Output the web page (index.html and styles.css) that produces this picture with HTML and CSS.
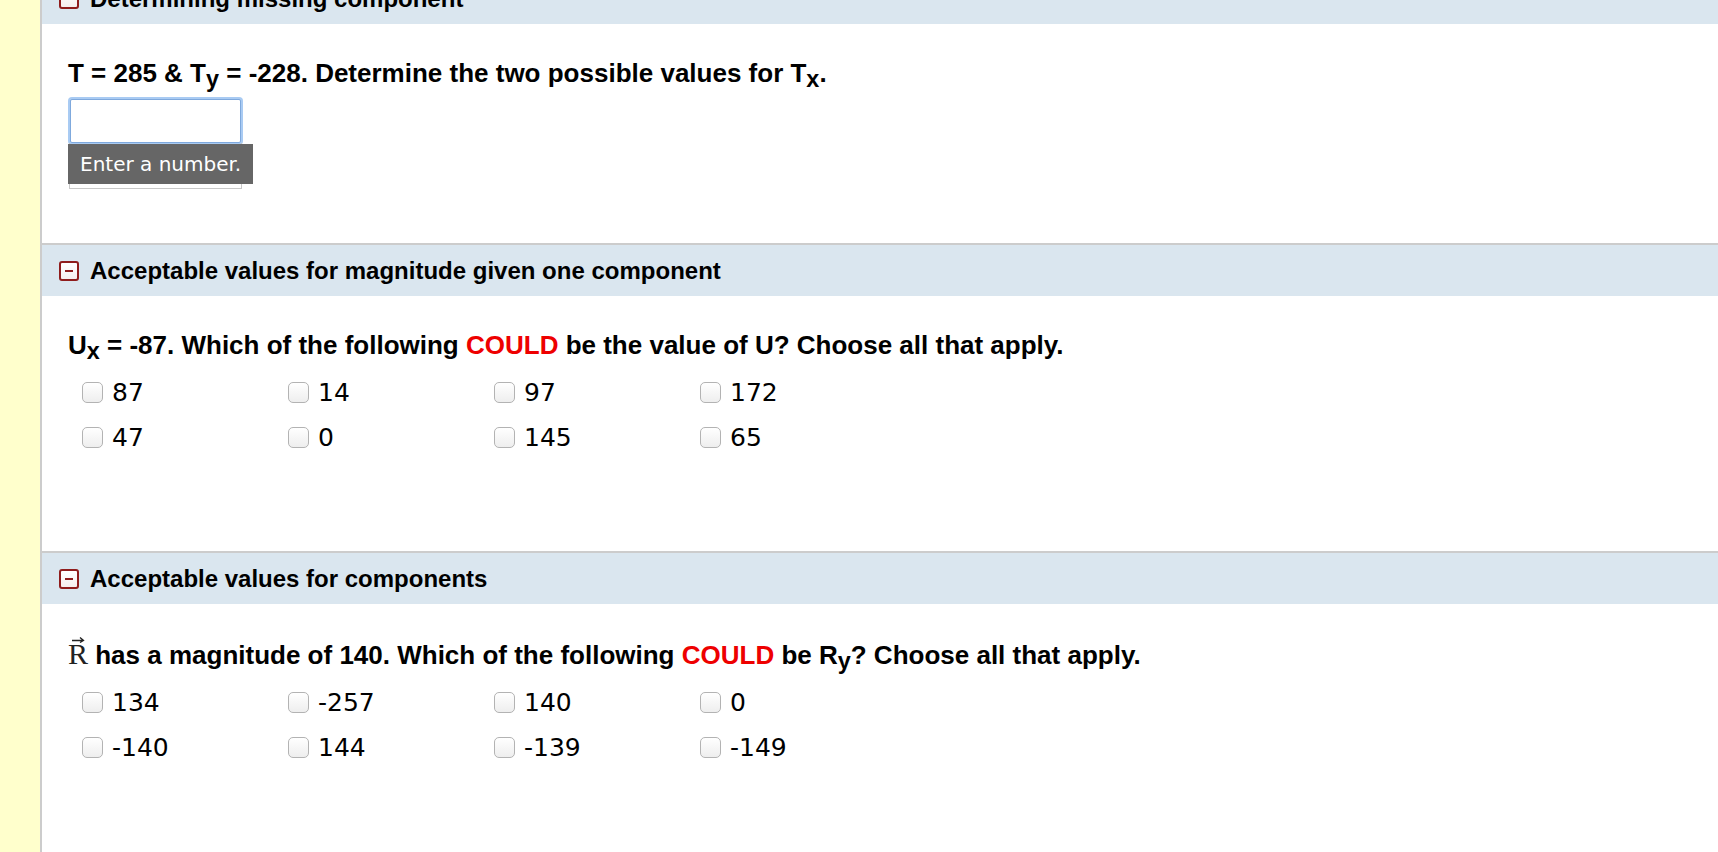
FILE: index.html
```html
<!DOCTYPE html>
<html lang="en">
<head>
<meta charset="UTF-8">
<title>Vector components</title>
<link rel="stylesheet" href="styles.css">
</head>
<body>
<div class="page">
  <div class="sidebar"></div>
  <div class="main">

    <!-- Determining missing component -->
    <div class="section first">
      <div class="section-head"><span class="toggle"></span>Determining missing component</div>
      <div class="section-body">
        <p class="question">T = 285 &amp; T<sub>y</sub> = -228. Determine the two possible values for T<sub>x</sub>.</p>
        <div class="answer">
          <input type="text" class="answer-input">
          <div class="answer-drop"></div>
          <div class="tooltip">Enter a number.</div>
        </div>
      </div>
    </div>

    <!-- Acceptable values for magnitude -->
    <div class="section">
      <div class="section-head"><span class="toggle"></span>Acceptable values for magnitude given one component</div>
      <div class="section-body">
        <p class="question">U<sub>x</sub> = -87. Which of the following <span class="hl">COULD</span> be the value of U? Choose all that apply.</p>
        <div class="options">
          <label class="option"><input type="checkbox">87</label>
          <label class="option"><input type="checkbox">14</label>
          <label class="option"><input type="checkbox">97</label>
          <label class="option"><input type="checkbox">172</label>
          <label class="option"><input type="checkbox">47</label>
          <label class="option"><input type="checkbox">0</label>
          <label class="option"><input type="checkbox">145</label>
          <label class="option"><input type="checkbox">65</label>
        </div>
      </div>
    </div>

    <!-- Acceptable values for components -->
    <div class="section">
      <div class="section-head"><span class="toggle"></span>Acceptable values for components</div>
      <div class="section-body">
        <p class="question"><span class="vec">R<svg class="vec-arrow" width="14" height="8" viewBox="0 0 14 8"><path d="M1 5.5H12.5M9 2.5L12.5 5.5L9 7.5" fill="none" stroke="#222" stroke-width="1.3"/></svg></span> has a magnitude of 140. Which of the following <span class="hl">COULD</span> be R<sub>y</sub>? Choose all that apply.</p>
        <div class="options">
          <label class="option"><input type="checkbox">134</label>
          <label class="option"><input type="checkbox">-257</label>
          <label class="option"><input type="checkbox">140</label>
          <label class="option"><input type="checkbox">0</label>
          <label class="option"><input type="checkbox">-140</label>
          <label class="option"><input type="checkbox">144</label>
          <label class="option"><input type="checkbox">-139</label>
          <label class="option"><input type="checkbox">-149</label>
        </div>
      </div>
    </div>

  </div>
</div>
</body>
</html>
```

FILE: styles.css
```css
body {
  margin: 0;
  font-family: "Liberation Sans", Arial, sans-serif;
  color: #000;
  background: #fff;
}
.page {
  display: flex;
  min-height: 100vh;
  overflow: hidden;
}
.sidebar {
  width: 40px;
  flex: none;
  background-color: #ffffcc;
  border-right: 2px solid #cccccc;
}
.main {
  flex: 1;
}
.section.first {
  margin-top: -29px;
}
.section-head {
  display: flex;
  align-items: center;
  height: 51px;
  padding-left: 17px;
  background-color: #dae6ef;
  border-top: 2px solid #cccccc;
  font-size: 24px;
  font-weight: bold;
}
.toggle {
  position: relative;
  width: 20px;
  height: 20px;
  box-sizing: border-box;
  margin-right: 11px;
  border: 2px solid #8f1c1c;
  border-radius: 3px;
  background: linear-gradient(#ffffff, #f6eeee);
}
.toggle::after {
  content: "";
  position: absolute;
  left: 4px;
  top: 7px;
  width: 8px;
  height: 2px;
  background: #8f1c1c;
}
.section-body {
  padding: 34px 26px 54px;
}
.question {
  margin: 0;
  font-size: 26px;
  line-height: 30px;
  font-weight: bold;
}
.question sub {
  font-size: 90%;
  line-height: 0;
  vertical-align: -5px;
}
.hl {
  color: #ee0000;
}
.vec {
  position: relative;
  display: inline-block;
  font-family: "Liberation Serif", "Times New Roman", serif;
  font-weight: normal;
  font-size: 30px;
  line-height: 32px;
  color: #222;
}
.vec-arrow {
  position: absolute;
  left: 3px;
  top: -3px;
}
.answer {
  position: relative;
  width: 175px;
  margin-top: 11px;
}
.answer-input {
  display: block;
  box-sizing: border-box;
  width: 171px;
  height: 44px;
  margin: 2px 2px 0;
  border: 1px solid #7fa9dd;
  border-radius: 2px;
  box-shadow: 0 0 0 2px #a9cbf3;
  outline: none;
}
.answer-drop {
  box-sizing: border-box;
  width: 173px;
  height: 46px;
  margin-left: 1px;
  border: 1px solid #c8c8c8;
  border-top: none;
}
.tooltip {
  position: absolute;
  left: 0;
  top: 45px;
  height: 40px;
  padding: 0 12px;
  line-height: 40px;
  background: #666666;
  color: #ffffff;
  font-family: "DejaVu Sans", Verdana, sans-serif;
  font-size: 20px;
  white-space: nowrap;
}
.options {
  display: grid;
  grid-template-columns: repeat(4, 206px);
  margin: 10px 0 37px 14px;
}
.option {
  display: flex;
  align-items: center;
  height: 45px;
  font-family: "DejaVu Sans", Verdana, sans-serif;
  font-size: 25px;
}
.option input {
  appearance: none;
  -webkit-appearance: none;
  flex: none;
  width: 21px;
  height: 21px;
  margin: 0 9px 0 0;
  border: 1px solid #b3b3b3;
  border-radius: 5px;
  background: linear-gradient(#ffffff, #eeeeee);
}
```
